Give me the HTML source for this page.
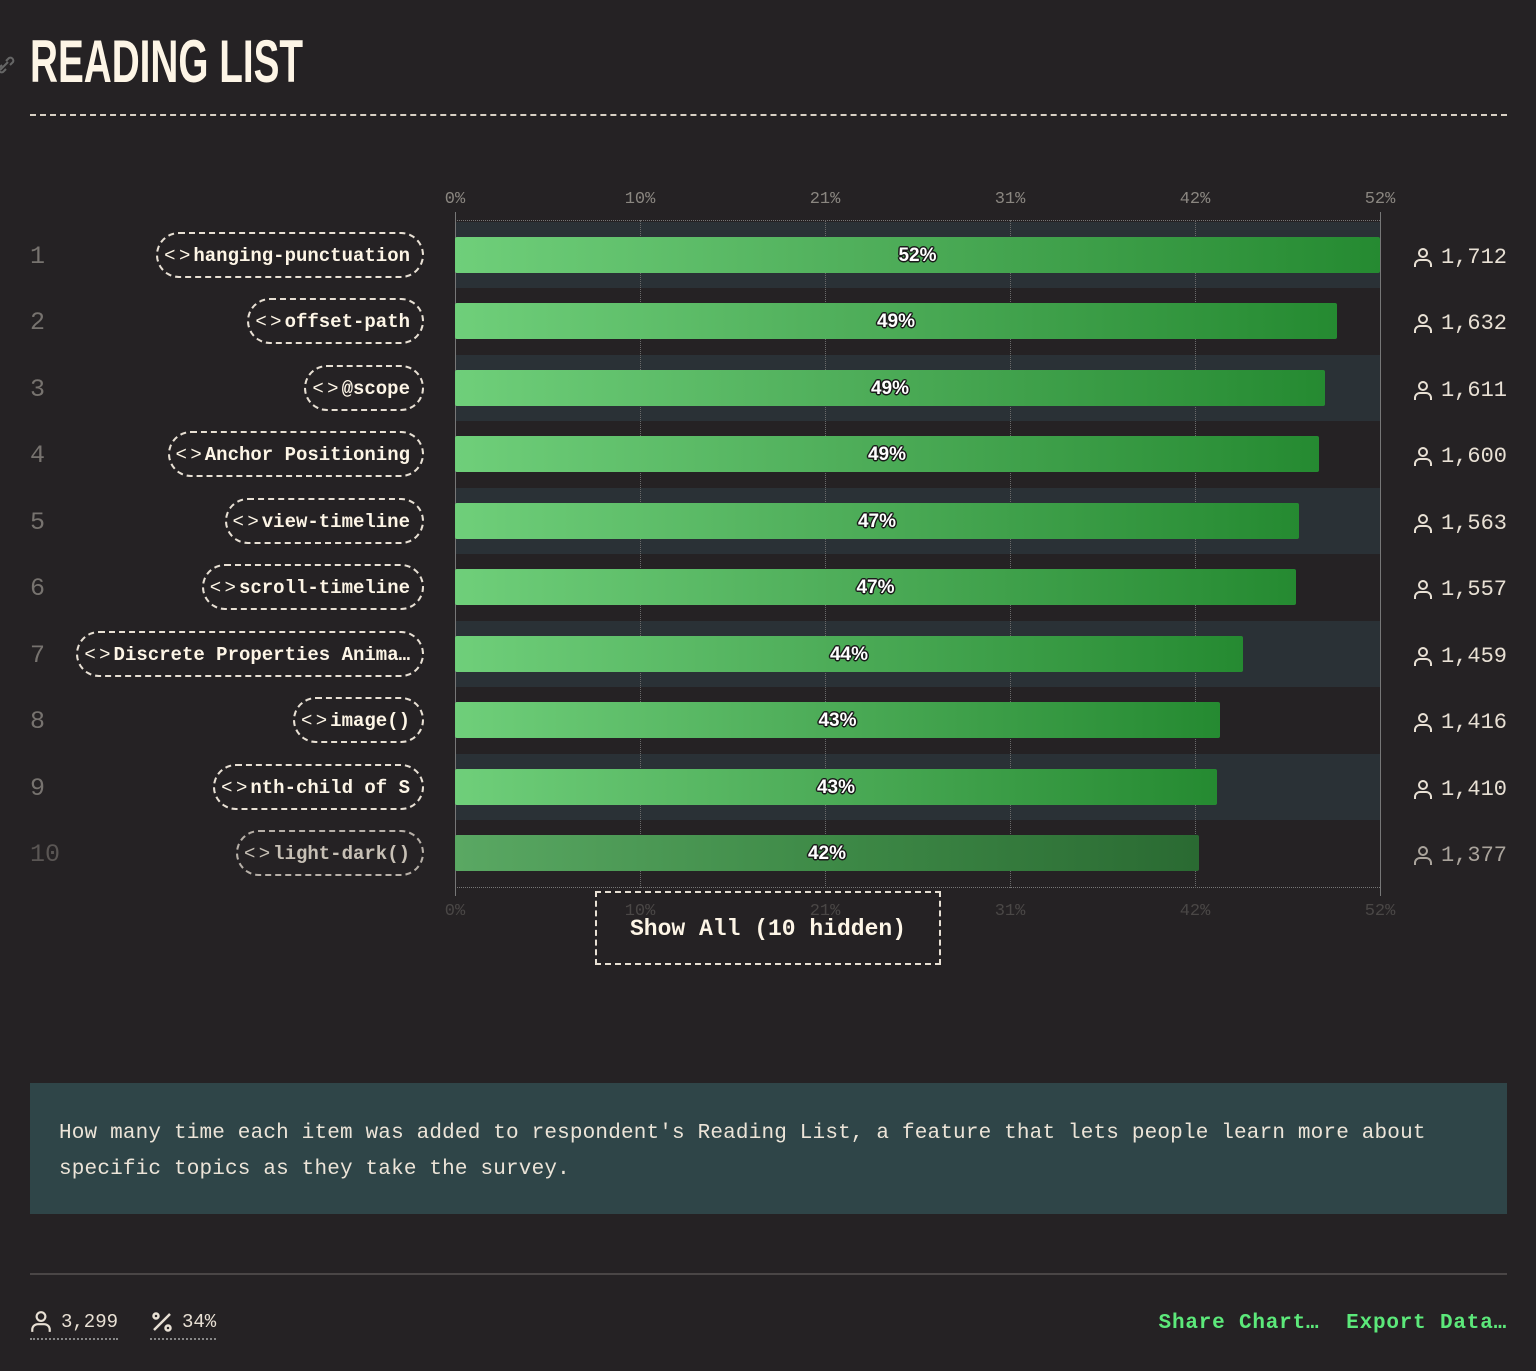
<!DOCTYPE html>
<html><head><meta charset="utf-8"><style>
*{margin:0;padding:0;box-sizing:border-box}
body{width:1536px;height:1371px;background:#252224;position:relative;overflow:hidden;font-family:"Liberation Mono",monospace;color:#fdf5e6}
.a{position:absolute}
h1{position:absolute;left:30px;top:30px;font-family:"Liberation Sans",sans-serif;font-weight:700;font-size:60px;line-height:64px;color:#fdf5e6;transform:scaleX(0.645);transform-origin:left;white-space:nowrap}
.hr{position:absolute;left:30px;width:1477px;top:114px;border-top:2px dashed #d8d0c4}
.band{position:absolute;left:455px;width:925px;height:66px;background:#2a3136}
.vg{position:absolute;top:220px;height:668px;border-left:1px dotted #6a6a6a}
.ax{position:absolute;font-size:17px;color:#8a8680;width:60px;text-align:center;margin-left:-30px}
.ax2{color:#4a4746}
.num{position:absolute;left:30px;font-size:25px;color:#77736f;line-height:30px;margin-top:2px}
.pill{position:absolute;right:1112px;height:46px;border:2px dashed #e8e0d4;border-radius:24px;padding:0 12px 0 6px;font-size:19px;font-weight:700;line-height:44px;white-space:nowrap;color:#fdf5e6}
.pill b{font-weight:400;margin-right:7px;letter-spacing:-4px}
.bar{position:absolute;left:455px;height:36px;border-radius:2px;background:linear-gradient(90deg,#6fcf7a,#4fae5a 45%,#258a31);text-align:center;line-height:38px;font-family:"Liberation Sans",sans-serif;font-weight:700;font-size:19px;color:#fff;text-shadow:-1.5px 0 #1a1a1a,1.5px 0 #1a1a1a,0 -1.5px #1a1a1a,0 1.5px #1a1a1a,1px 1px #1a1a1a,-1px -1px #1a1a1a,1px -1px #1a1a1a,-1px 1px #1a1a1a}
.cnt{position:absolute;right:29px;font-size:22px;line-height:30px;color:#e8e0d4;display:flex;align-items:center;gap:8px;margin-top:2px}
.cnt svg{width:20px;height:22px}
</style></head><body>
<svg class="a" style="left:-4px;top:52px" width="20" height="26" viewBox="0 0 20 26"><path d="M4 18l8-8M6 13l-3 3a3 3 0 004 4l3-3M10 9l3-3a3 3 0 014 4l-3 3" stroke="#666" stroke-width="2" fill="none"/></svg>
<h1>READING LIST</h1>
<div class="hr"></div>

<div class="band" style="top:222px"></div>
<div class="band" style="top:355px"></div>
<div class="band" style="top:488px"></div>
<div class="band" style="top:621px"></div>
<div class="band" style="top:754px"></div>

<div class="a" style="left:455px;top:220px;width:925px;border-top:1px dotted #777"></div>
<div class="a" style="left:455px;top:887px;width:925px;border-top:1px dotted #777"></div>
<div class="vg" style="left:455px;top:212px;height:684px;border-left:1px solid #777"></div>
<div class="vg" style="left:640px"></div>
<div class="vg" style="left:825px"></div>
<div class="vg" style="left:1010px"></div>
<div class="vg" style="left:1195px"></div>
<div class="vg" style="left:1380px;top:212px;height:684px;border-left:1px solid #777"></div>

<div class="ax" style="left:455px;top:190px">0%</div>
<div class="ax" style="left:640px;top:190px">10%</div>
<div class="ax" style="left:825px;top:190px">21%</div>
<div class="ax" style="left:1010px;top:190px">31%</div>
<div class="ax" style="left:1195px;top:190px">42%</div>
<div class="ax" style="left:1380px;top:190px">52%</div>
<div class="ax ax2" style="left:455px;top:902px">0%</div>
<div class="ax ax2" style="left:640px;top:902px">10%</div>
<div class="ax ax2" style="left:825px;top:902px">21%</div>
<div class="ax ax2" style="left:1010px;top:902px">31%</div>
<div class="ax ax2" style="left:1195px;top:902px">42%</div>
<div class="ax ax2" style="left:1380px;top:902px">52%</div>

<div class="num" style="top:240px">1</div>
<div class="num" style="top:306px">2</div>
<div class="num" style="top:373px">3</div>
<div class="num" style="top:439px">4</div>
<div class="num" style="top:506px">5</div>
<div class="num" style="top:572px">6</div>
<div class="num" style="top:639px">7</div>
<div class="num" style="top:705px">8</div>
<div class="num" style="top:772px">9</div>
<div class="num" style="top:838px;color:#5a5654">10</div>

<div class="pill" style="top:232px"><b>&lt; &gt;</b>hanging-punctuation</div>
<div class="pill" style="top:298px"><b>&lt; &gt;</b>offset-path</div>
<div class="pill" style="top:365px"><b>&lt; &gt;</b>@scope</div>
<div class="pill" style="top:431px"><b>&lt; &gt;</b>Anchor Positioning</div>
<div class="pill" style="top:498px"><b>&lt; &gt;</b>view-timeline</div>
<div class="pill" style="top:564px"><b>&lt; &gt;</b>scroll-timeline</div>
<div class="pill" style="top:631px"><b>&lt; &gt;</b>Discrete Properties Anima…</div>
<div class="pill" style="top:697px"><b>&lt; &gt;</b>image()</div>
<div class="pill" style="top:764px"><b>&lt; &gt;</b>nth-child of S</div>
<div class="pill" style="top:830px;opacity:.75"><b>&lt; &gt;</b>light-dark()</div>

<div class="bar" style="top:237px;width:925px">52%</div>
<div class="bar" style="top:303px;width:882px">49%</div>
<div class="bar" style="top:370px;width:870px">49%</div>
<div class="bar" style="top:436px;width:864px">49%</div>
<div class="bar" style="top:503px;width:844px">47%</div>
<div class="bar" style="top:569px;width:841px">47%</div>
<div class="bar" style="top:636px;width:788px">44%</div>
<div class="bar" style="top:702px;width:765px">43%</div>
<div class="bar" style="top:769px;width:762px">43%</div>
<div class="bar" style="top:835px;width:744px;background:linear-gradient(90deg,#5aa863,#3e8a47 50%,#2a6a32)">42%</div>

<div class="cnt" style="top:241px"><svg viewBox="0 0 20 22"><circle cx="10" cy="6" r="4" stroke="#e8e0d4" stroke-width="2" fill="none"/><path d="M2 20v-2a5 5 0 015-5h6a5 5 0 015 5v2" stroke="#e8e0d4" stroke-width="2" fill="none"/></svg>1,712</div>
<div class="cnt" style="top:307px"><svg viewBox="0 0 20 22"><circle cx="10" cy="6" r="4" stroke="#e8e0d4" stroke-width="2" fill="none"/><path d="M2 20v-2a5 5 0 015-5h6a5 5 0 015 5v2" stroke="#e8e0d4" stroke-width="2" fill="none"/></svg>1,632</div>
<div class="cnt" style="top:374px"><svg viewBox="0 0 20 22"><circle cx="10" cy="6" r="4" stroke="#e8e0d4" stroke-width="2" fill="none"/><path d="M2 20v-2a5 5 0 015-5h6a5 5 0 015 5v2" stroke="#e8e0d4" stroke-width="2" fill="none"/></svg>1,611</div>
<div class="cnt" style="top:440px"><svg viewBox="0 0 20 22"><circle cx="10" cy="6" r="4" stroke="#e8e0d4" stroke-width="2" fill="none"/><path d="M2 20v-2a5 5 0 015-5h6a5 5 0 015 5v2" stroke="#e8e0d4" stroke-width="2" fill="none"/></svg>1,600</div>
<div class="cnt" style="top:507px"><svg viewBox="0 0 20 22"><circle cx="10" cy="6" r="4" stroke="#e8e0d4" stroke-width="2" fill="none"/><path d="M2 20v-2a5 5 0 015-5h6a5 5 0 015 5v2" stroke="#e8e0d4" stroke-width="2" fill="none"/></svg>1,563</div>
<div class="cnt" style="top:573px"><svg viewBox="0 0 20 22"><circle cx="10" cy="6" r="4" stroke="#e8e0d4" stroke-width="2" fill="none"/><path d="M2 20v-2a5 5 0 015-5h6a5 5 0 015 5v2" stroke="#e8e0d4" stroke-width="2" fill="none"/></svg>1,557</div>
<div class="cnt" style="top:640px"><svg viewBox="0 0 20 22"><circle cx="10" cy="6" r="4" stroke="#e8e0d4" stroke-width="2" fill="none"/><path d="M2 20v-2a5 5 0 015-5h6a5 5 0 015 5v2" stroke="#e8e0d4" stroke-width="2" fill="none"/></svg>1,459</div>
<div class="cnt" style="top:706px"><svg viewBox="0 0 20 22"><circle cx="10" cy="6" r="4" stroke="#e8e0d4" stroke-width="2" fill="none"/><path d="M2 20v-2a5 5 0 015-5h6a5 5 0 015 5v2" stroke="#e8e0d4" stroke-width="2" fill="none"/></svg>1,416</div>
<div class="cnt" style="top:773px"><svg viewBox="0 0 20 22"><circle cx="10" cy="6" r="4" stroke="#e8e0d4" stroke-width="2" fill="none"/><path d="M2 20v-2a5 5 0 015-5h6a5 5 0 015 5v2" stroke="#e8e0d4" stroke-width="2" fill="none"/></svg>1,410</div>
<div class="cnt" style="top:839px;color:#aaa49c"><svg viewBox="0 0 20 22"><circle cx="10" cy="6" r="4" stroke="#aaa49c" stroke-width="2" fill="none"/><path d="M2 20v-2a5 5 0 015-5h6a5 5 0 015 5v2" stroke="#aaa49c" stroke-width="2" fill="none"/></svg>1,377</div>

<div class="a" style="left:595px;top:891px;width:346px;height:74px;border:2px dashed #e8e0d4;font-size:23px;font-weight:700;text-align:center;line-height:72px">Show All (10 hidden)</div>

<div class="a" style="left:30px;top:1083px;width:1477px;height:131px;background:#2f4548;padding:33px 29px 0;font-size:21px;line-height:36px;letter-spacing:0.17px;color:#ece4d8">How many time each item was added to respondent's Reading List, a feature that lets people learn more about specific topics as they take the survey.</div>

<div class="a" style="left:30px;top:1273px;width:1477px;border-top:2px solid #4a4646"></div>

<div class="a" style="left:30px;top:1310px;font-size:19px;color:#e8e0d4;display:flex;align-items:center;gap:9px;border-bottom:2px dotted #888;padding-bottom:4px"><svg width="22" height="24" viewBox="0 0 20 22"><circle cx="10" cy="6" r="4" stroke="#e8e0d4" stroke-width="2" fill="none"/><path d="M2 20v-2a5 5 0 015-5h6a5 5 0 015 5v2" stroke="#e8e0d4" stroke-width="2" fill="none"/></svg>3,299</div>
<div class="a" style="left:150px;top:1310px;font-size:19px;color:#e8e0d4;display:flex;align-items:center;gap:8px;border-bottom:2px dotted #888;padding-bottom:4px"><svg width="24" height="24" viewBox="0 0 24 24"><path d="M4 20L20 4" stroke="#e8e0d4" stroke-width="2.5"/><circle cx="6" cy="6" r="2.5" stroke="#e8e0d4" stroke-width="2.5" fill="none"/><circle cx="18" cy="18" r="2.5" stroke="#e8e0d4" stroke-width="2.5" fill="none"/></svg>34%</div>

<div class="a" style="right:29px;top:1312px;font-size:21px;font-weight:700;color:#5ce87a;white-space:nowrap;letter-spacing:0.8px">Share Chart…&nbsp;&nbsp;Export Data…</div>
</body></html>
